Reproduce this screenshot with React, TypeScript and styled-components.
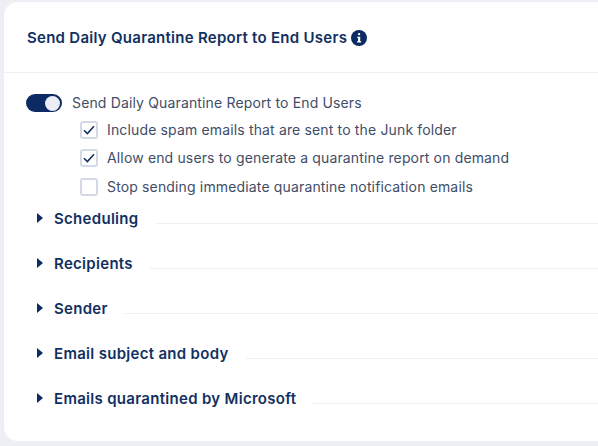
import React from 'react'
import styled, { createGlobalStyle } from 'styled-components'

const GlobalStyle = createGlobalStyle`
  html, body {
    margin: 0;
    padding: 0;
    width: 598px;
    height: 446px;
    overflow: hidden;
    background: #eeeff5;
    font-family: 'Inter', 'Noto Sans', sans-serif;
  }
`

const Page = styled.div`
  box-sizing: border-box;
  width: 598px;
  height: 446px;
  padding: 2px 0 5px 4px;
  overflow: hidden;
`

const Card = styled.section`
  box-sizing: border-box;
  width: 640px;
  height: 439px;
  background: #fff;
  border-radius: 14px;
`

const Header = styled.header`
  box-sizing: border-box;
  height: 71px;
  display: flex;
  align-items: center;
  gap: 4px;
  padding: 2px 0 0 23px;
  border-bottom: 1px solid #eeeff3;
`

const Title = styled.h2`
  margin: 0;
  font-size: 15px;
  line-height: 20px;
  font-weight: 600;
  letter-spacing: 0.27px;
  color: #12305f;
`

const Body = styled.div`
  padding: 21px 0 0 22px;
`

const ToggleRow = styled.div`
  display: flex;
  align-items: center;
  height: 18px;
  gap: 10px;
`

const Toggle = styled.span`
  box-sizing: border-box;
  width: 36px;
  height: 18px;
  border-radius: 9px;
  background: #0c2b63;
  display: flex;
  justify-content: flex-end;
  align-items: center;
  padding-right: 2px;
`

const Knob = styled.span`
  width: 15px;
  height: 15px;
  border-radius: 50%;
  background: #eceef6;
`

const Label = styled.span`
  font-size: 14px;
  line-height: 18px;
  letter-spacing: 0.15px;
  color: #3f4d68;
`

const Options = styled.div`
  display: flex;
  flex-direction: column;
  gap: 10px;
  padding: 9px 0 0 54px;
`

const OptionRow = styled.label`
  display: flex;
  align-items: center;
  height: 18px;
  gap: 9px;

  &:last-child {
    margin-top: 1px;
  }
`

const Box = styled.span`
  box-sizing: border-box;
  width: 18px;
  height: 18px;
  border: 2px solid #d3d9e6;
  border-radius: 3px;
  background: #fff;
  display: flex;
  align-items: center;
  justify-content: center;
`

const Sections = styled.div`
  display: flex;
  flex-direction: column;
  gap: 27px;
  padding: 13px 0 0 11px;
`

const SectionRow = styled.div`
  display: flex;
  align-items: center;
  height: 18px;
`

const Caret = styled.svg`
  width: 6px;
  height: 10px;
  margin-right: 11px;
  flex: none;
`

const SectionTitle = styled.span`
  padding-top: 2px;
  font-size: 15px;
  line-height: 20px;
  font-weight: 600;
  letter-spacing: 0.3px;
  color: #12305f;
  white-space: nowrap;
`

const Rule = styled.span`
  flex: 1;
  height: 1px;
  margin: 10px 0 0 17px;
  background: #eeeff3;
`

const InfoIcon = () => (
  <svg width="16" height="16" viewBox="0 0 16 16" aria-hidden="true">
    <circle cx="8" cy="8" r="8" fill="#0c2b63" />
    <rect x="6.9" y="3" width="2.3" height="2.3" rx="1" fill="#fff" />
    <path d="M6.2 6.7h3v4.6h1v1.3H6v-1.3h1.1V8H6.2z" fill="#fff" />
  </svg>
)

const Check = () => (
  <svg width="12" height="10" viewBox="0 0 12 10" aria-hidden="true">
    <path d="M1 5.2l3.4 3.4L11 1.2" fill="none" stroke="#12305f" strokeWidth="1.6" />
  </svg>
)

const options = [
  { text: 'Include spam emails that are sent to the Junk folder', checked: true },
  { text: 'Allow end users to generate a quarantine report on demand', checked: true },
  { text: 'Stop sending immediate quarantine notification emails', checked: false },
]

const sections = ['Scheduling', 'Recipients', 'Sender', 'Email subject and body', 'Emails quarantined by Microsoft']

const App: React.FC = () => (
  <>
    <GlobalStyle />
    <Page>
      <Card>
        <Header>
          <Title>Send Daily Quarantine Report to End Users</Title>
          <InfoIcon />
        </Header>
        <Body>
          <ToggleRow>
            <Toggle>
              <Knob />
            </Toggle>
            <Label>Send Daily Quarantine Report to End Users</Label>
          </ToggleRow>
          <Options>
            {options.map((o) => (
              <OptionRow key={o.text}>
                <Box>{o.checked && <Check />}</Box>
                <Label>{o.text}</Label>
              </OptionRow>
            ))}
          </Options>
          <Sections>
            {sections.map((s) => (
              <SectionRow key={s}>
                <Caret viewBox="0 0 6 10" aria-hidden="true">
                  <path d="M0 0l6 5-6 5z" fill="#0c2b63" />
                </Caret>
                <SectionTitle>{s}</SectionTitle>
                <Rule />
              </SectionRow>
            ))}
          </Sections>
        </Body>
      </Card>
    </Page>
  </>
)

export default App
